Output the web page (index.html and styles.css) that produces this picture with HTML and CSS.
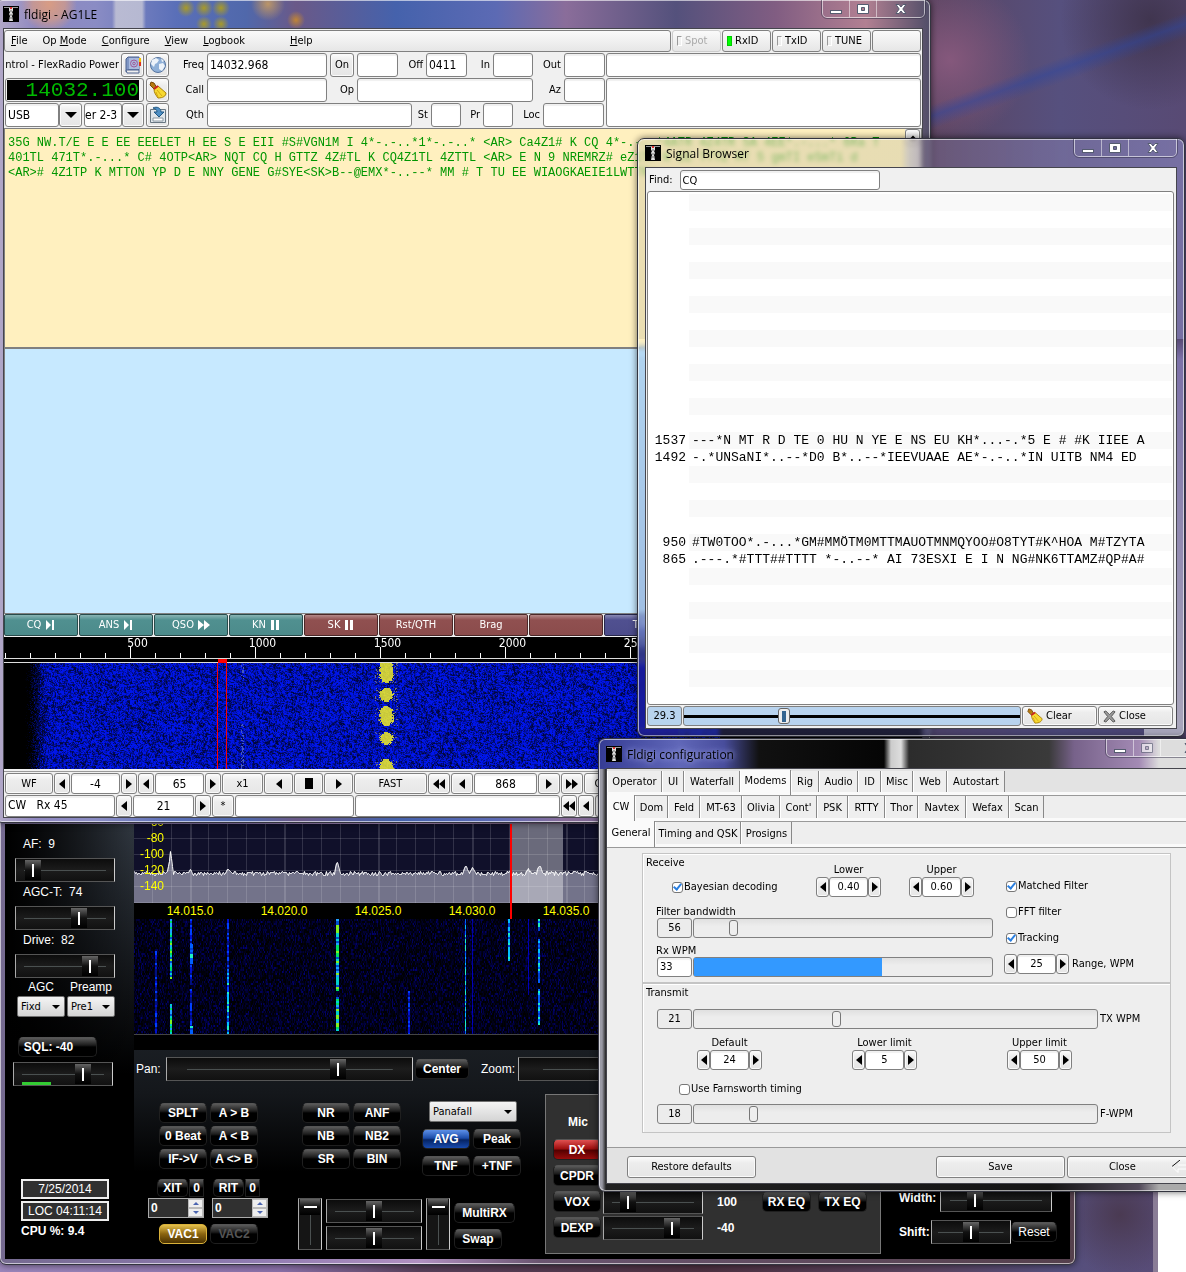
FILE: index.html
```html
<!DOCTYPE html>
<html lang="en">
<head>
    <meta charset="UTF-8">
    <meta name="viewport" content="width=device-width, initial-scale=1.0">
    <title>fldigi - AG1LE</title>
    <link rel="stylesheet" href="styles.css">
</head>
<body>
    <!-- icon set -->
    <svg class="sprites" aria-hidden="true">
        <symbol id="app" viewBox="0 0 16 16"><path d="M0 0h16v16H0z" fill="#000"/><path d="M1 1.500h14" stroke="#999"/><path d="M6 2h4v3l-1 1 1 2-1 2 1 5H6l1-5-1-2 1-2-1-1z" fill="#ddd"/><path d="M7 1h2v2H7z" fill="#d33"/><path d="M7 5h2M7 9h2M6 12h4" stroke="#777"/></symbol>
        <symbol id="left" viewBox="0 0 6 10"><path d="M6 0v10L0 5z"/></symbol>
        <symbol id="right" viewBox="0 0 6 10"><path d="M0 0v10l6-5z"/></symbol>
        <symbol id="left2" viewBox="0 0 12 10"><path d="M6 0v10L0 5zM12 0v10L6 5z"/></symbol>
        <symbol id="right2" viewBox="0 0 12 10"><path d="M0 0v10l6-5zM6 0v10l6-5z"/></symbol>
        <symbol id="next" viewBox="0 0 10 10"><path d="M1 0v10l5-5zM7 0h2v10H7z"/></symbol>
        <symbol id="pause" viewBox="0 0 10 10"><path d="M1 0h3v10H1zM6 0h3v10H6z"/></symbol>
        <symbol id="down" viewBox="0 0 12 6"><path d="M0 0h12L6 6z"/></symbol>
        <symbol id="up" viewBox="0 0 12 6"><path d="M0 6h12L6 0z"/></symbol>
        <symbol id="min" viewBox="0 0 14 12"><rect x="1.500" y="7.500" width="11" height="3" fill="#fff" stroke="#555c70"/></symbol>
        <symbol id="max" viewBox="0 0 14 12"><path d="M1.500 1.500h11v9h-11zM5.500 4.500h3v3h-3z" fill="#fff" fill-rule="evenodd" stroke="#555c70"/></symbol>
        <symbol id="exit" viewBox="0 0 14 12"><path d="M2 1.500h3l2 2.500 2-2.500h3L8.800 6l3.200 4.500H9L7 8l-2 2.500H2L5.200 6z" fill="#fff" stroke="#555c70"/></symbol>
        <symbol id="book" viewBox="0 0 18 18"><path d="M4 1h11v13H4L2 16V3z" fill="#7f96c4" stroke="#4c628f"/><path d="M5 2h10v11H5z" fill="#a9bbdf"/><path d="M2 14h13v3H3z" fill="#eee" stroke="#4c628f"/><path d="M15 2h2v4h-2z" fill="#f5c400"/><path d="M15 6h2v4h-2z" fill="#dc3220"/><circle cx="10" cy="7.500" r="3.500" fill="none" stroke="#a05a98"/><circle cx="10" cy="7.500" r="1.300" fill="none" stroke="#a05a98"/></symbol>
        <symbol id="globe" viewBox="0 0 18 18"><circle cx="9" cy="9" r="7.500" fill="#8fb0d8" stroke="#56749f"/><path d="M3 4l4-2 3 2-2 3-2 1-1 3-3-3zM10 8l4-1 2 3-3 5-3-2zM12 2l3 3-2 1z" fill="#edf3fa"/></symbol>
        <symbol id="broom" viewBox="0 0 18 18"><path d="M2 1l3 1 3 5-2 2-5-5z" fill="#b67a10" stroke="#7a4a05"/><path d="M5 8l4-3 8 7c0 3-3 5-8 5-2-3-4-5-4-9z" fill="#f7d930" stroke="#a8800b"/><path d="M5 8l4-3" stroke="#c22" stroke-width="2"/><path d="M8 9l5 6M7 11l2 5" stroke="#d5a712"/></symbol>
        <symbol id="store" viewBox="0 0 18 18"><path d="M1.500 3.500h15v13h-15z" fill="#dfe5ea" stroke="#697782"/><path d="M4 12h10v3H4z" fill="#fff" stroke="#8b98a2"/><path d="M4 2c4-2 8 0 8 4h3l-5 5-5-5h3c0-2-1-3-4-4z" fill="#4e8fc4" stroke="#205783"/></symbol>
        <symbol id="cross" viewBox="0 0 14 14"><path d="M1 2l2-1 4 4 4-4 2 1-4 5 4 5-2 1-4-4-4 4-2-1 4-5z" fill="#999" stroke="#555"/></symbol>
    </svg>

    <main class="desktop">
        <div class="back-window"></div>

        <!-- radio console -->
        <section class="window radio">
            <div class="radio-body">
                <aside class="radio-side">
                    <label class="side-label" for="af">AF:&nbsp; 9</label>
                    <input class="fader" id="af" type="range" value="11">
                    <label class="side-label" for="agct">AGC-T:&nbsp; 74</label>
                    <input class="fader" id="agct" type="range" value="67">
                    <label class="side-label" for="drive">Drive:&nbsp; 82</label>
                    <input class="fader" id="drive" type="range" value="81">
                    <div class="combo-pair">
                        <label><span>AGC</span><span class="combo"><select><option>Fixd</option></select></span></label>
                        <label><span>Preamp</span><span class="combo"><select><option>Pre1</option></select></span></label>
                    </div>
                    <button class="dark sql">SQL: -40</button>
                    <div class="sql-meter">
                        <input class="fader" type="range" value="74" aria-label="Squelch">
                        <div class="meter"></div>
                    </div>
                    <div class="clock">
                        <div class="clock-box">7/25/2014</div>
                        <div class="clock-box">LOC 04:11:14</div>
                        <b>CPU %: 9.4</b>
                    </div>
                </aside>
                <div class="radio-main">
                    <div class="scope">
                        <canvas id="pan" width="936" height="79"></canvas>
                        <div class="db-scale"><span>-60</span><span>-80</span><span>-100</span><span>-120</span><span>-140</span></div>
                    </div>
                    <div class="freq-scale"><span>14.015.0</span><span>14.020.0</span><span>14.025.0</span><span>14.030.0</span><span>14.035.0</span></div>
                    <canvas id="panfall" width="936" height="115"></canvas>
                    <div class="pan-gap"></div>
                    <div class="pan-row">
                        <label for="panpos">Pan:</label>
                        <input class="fader pan-fader" id="panpos" type="range" value="71">
                        <button class="dark center">Center</button>
                        <label for="zoom">Zoom:</label>
                        <input class="fader zoom-fader" id="zoom" type="range" value="50">
                    </div>
                    <div class="console">
                        <div class="vfo">
                            <div class="pads">
                                <button class="dark">SPLT</button><button class="dark">A &gt; B</button>
                                <button class="dark">0 Beat</button><button class="dark">A &lt; B</button>
                                <button class="dark">IF-&gt;V</button><button class="dark">A &lt;&gt; B</button>
                            </div>
                            <div class="offsets">
                                <div><button class="dark">XIT</button><button class="dark zero">0</button></div>
                                <div><button class="dark">RIT</button><button class="dark zero">0</button></div>
                            </div>
                            <div class="steppers">
                                <div class="stepper"><input value="0" aria-label="XIT offset"><span><button aria-label="XIT up"><svg><use href="#up"/></svg></button><button aria-label="XIT down"><svg><use href="#down"/></svg></button></span></div>
                                <div class="stepper"><input value="0" aria-label="RIT offset"><span><button aria-label="RIT up"><svg><use href="#up"/></svg></button><button aria-label="RIT down"><svg><use href="#down"/></svg></button></span></div>
                            </div>
                            <div class="pads vac">
                                <button class="dark gold">VAC1</button><button class="dark off">VAC2</button>
                            </div>
                        </div>
                        <div class="dsp">
                            <div class="dsp-top">
                                <div class="pads">
                                    <button class="dark">NR</button><button class="dark">ANF</button>
                                    <button class="dark">NB</button><button class="dark">NB2</button>
                                    <button class="dark">SR</button><button class="dark">BIN</button>
                                </div>
                                <div class="display">
                                    <span class="combo wide"><select aria-label="Display"><option>Panafall</option></select></span>
                                    <div class="pads loose">
                                        <button class="dark blue">AVG</button><button class="dark">Peak</button>
                                        <button class="dark">TNF</button><button class="dark">+TNF</button>
                                    </div>
                                </div>
                            </div>
                            <div class="multi">
                                <input class="fader upright" type="range" value="100" aria-label="RX1 level">
                                <div class="multi-col">
                                    <input class="fader" type="range" value="50" aria-label="RX1 balance">
                                    <input class="fader" type="range" value="50" aria-label="RX2 balance">
                                </div>
                                <input class="fader upright" type="range" value="100" aria-label="RX2 level">
                                <div class="multi-buttons">
                                    <button class="dark multirx">MultiRX</button>
                                    <button class="dark">Swap</button>
                                </div>
                            </div>
                        </div>
                        <div class="mic">
                            <div class="mic-buttons">
                                <b>Mic</b>
                                <button class="dark red">DX</button>
                                <button class="dark">CPDR</button>
                                <button class="dark">VOX</button>
                                <button class="dark">DEXP</button>
                            </div>
                            <div class="mic-levels">
                                <div><input class="fader" type="range" value="20" aria-label="VOX level"><b>100</b><button class="dark">RX EQ</button><button class="dark">TX EQ</button></div>
                                <div><input class="fader" type="range" value="73" aria-label="DEXP level"><b>-40</b></div>
                            </div>
                        </div>
                        <div class="filter">
                            <div><label for="fwidth">Width:</label><input class="fader" id="fwidth" type="range" value="28"></div>
                            <div><label for="fshift">Shift:</label><input class="fader short" id="fshift" type="range" value="50"><button class="dark reset">Reset</button></div>
                        </div>
                    </div>
                </div>
            </div>
        </section>

        <!-- fldigi main window -->
        <section class="window fldigi">
            <header class="titlebar">
                <svg class="app-icon"><use href="#app"/></svg>
                <h1>fldigi - AG1LE</h1>
                <div class="win-buttons">
                    <button aria-label="Minimize"><svg><use href="#min"/></svg></button><button aria-label="Maximize"><svg><use href="#max"/></svg></button><button class="exit" aria-label="Close window"><svg><use href="#exit"/></svg></button>
                </div>
            </header>
            <div class="client">
                <div class="top-row">
                    <nav class="menubar">
                        <button><u>F</u>ile</button><button>Op <u>M</u>ode</button><button><u>C</u>onfigure</button><button><u>V</u>iew</button><button><u>L</u>ogbook</button><button class="help"><u>H</u>elp</button>
                    </nav>
                    <button class="light" disabled><i></i>Spot</button>
                    <button class="light on"><i></i>RxID</button>
                    <button class="light"><i></i>TxID</button>
                    <button class="light"><i></i>TUNE</button>
                    <button class="light" aria-label="Blank"></button>
                </div>
                <div class="log">
                    <div class="rig">
                        <div class="row"><span class="rig-name">ontrol - FlexRadio Power</span><button class="btn icon" aria-label="Callbook"><svg><use href="#book"/></svg></button><button class="btn icon" aria-label="Web lookup"><svg><use href="#globe"/></svg></button></div>
                        <div class="row"><div class="lcd"><output>14032.100</output></div><button class="btn icon" aria-label="Clear log fields"><svg><use href="#broom"/></svg></button></div>
                        <div class="row"><div class="choice"><input class="field" value="USB" aria-label="Mode"><button class="btn" aria-label="Pick mode"><svg class="arrow-down"><use href="#down"/></svg></button></div><div class="choice narrow"><input class="field" value="er 2-3" aria-label="Filter"><button class="btn" aria-label="Pick filter"><svg class="arrow-down"><use href="#down"/></svg></button></div><button class="btn icon" aria-label="Save contact"><svg><use href="#store"/></svg></button></div>
                    </div>
                    <div class="contact">
                        <div class="row">
                            <label class="w33" for="freq">Freq</label><input class="field w120" id="freq" value="14032.968">
                            <button class="btn w24">On</button><input class="field w41" aria-label="Time on">
                            <label class="w22" for="toff">Off</label><input class="field w41" id="toff" value="0411">
                            <label class="w20" for="rin">In</label><input class="field w40" id="rin">
                            <label class="w25" for="rout">Out</label><input class="field w41" id="rout">
                        </div>
                        <div class="row">
                            <label class="w33" for="call">Call</label><input class="field w120" id="call">
                            <label class="w24" for="op">Op</label><input class="field w176" id="op">
                            <label class="w25" for="az">Az</label><input class="field w41" id="az">
                        </div>
                        <div class="row">
                            <label class="w33" for="qth">Qth</label><input class="field w205" id="qth">
                            <label class="w13" for="st">St</label><input class="field w30" id="st">
                            <label class="w16" for="pr">Pr</label><input class="field w30" id="pr">
                            <label class="w24" for="loc">Loc</label><input class="field w61" id="loc">
                        </div>
                    </div>
                    <div class="notes">
                        <input class="field" aria-label="Country">
                        <textarea class="field" aria-label="Notes"></textarea>
                    </div>
                </div>
                <div class="rx">
                    <pre>35G NW.T/E E E EE EEELET H EE S E EII #S#VGN1M I 4*-.-..*1*-.-..* &lt;AR&gt; Ca4Z1# K CQ 4*-.-..*4ATR 4Z4TR SA 4EE*.-...* 6Ra T
401TL 471T*.-...* C# 4OTP&lt;AR&gt; NQT CQ H GTTZ 4Z#TL K CQ4Z1TL 4ZTTL &lt;AR&gt; E N 9 NREMRZ# eZ1TP K EE TTTZ MT 5 gmTI eSmTi d
&lt;AR&gt;# 4Z1TP K MTTON YP D E NNY GENE G#SYE&lt;SK&gt;B--@EMX*-..--* MM # T TU EE WIAOGKAEIE1LWTTN&lt;</pre>
                    <div class="scroll"><button class="btn" aria-label="Scroll up"><svg><use href="#up"/></svg></button></div>
                </div>
                <textarea class="tx" aria-label="Transmit text"></textarea>
                <div class="macros">
                    <button>CQ <svg><use href="#next"/></svg></button><button>ANS <svg><use href="#next"/></svg></button><button>QSO <svg class="dbl"><use href="#right2"/></svg></button><button>KN <svg><use href="#pause"/></svg></button>
                    <button class="m-red">SK <svg><use href="#pause"/></svg></button><button class="m-red">Rst/QTH</button><button class="m-red">Brag</button><button class="m-red" aria-label="Macro 8"></button>
                    <button class="m-blue">T/R</button>
                </div>
                <div class="hz-scale"><span>500</span><span>1000</span><span>1500</span><span>2000</span><span>2500</span></div>
                <div class="cursor-bar"><i></i></div>
                <canvas id="fall" width="918" height="106"></canvas>
                <div class="controls">
                    <button class="btn c48">WF</button>
                    <div class="spin"><button class="btn" aria-label="Level down"><svg><use href="#left"/></svg></button><input class="field" value="-4" aria-label="Upper level"><button class="btn" aria-label="Level up"><svg><use href="#right"/></svg></button></div>
                    <div class="spin"><button class="btn" aria-label="Range down"><svg><use href="#left"/></svg></button><input class="field" value="65" aria-label="Range"><button class="btn" aria-label="Range up"><svg><use href="#right"/></svg></button></div>
                    <button class="btn c41">x1</button>
                    <button class="btn c29" aria-label="Shift left"><svg><use href="#left"/></svg></button><button class="btn c29" aria-label="Centre"><i class="stop"></i></button><button class="btn c29" aria-label="Shift right"><svg><use href="#right"/></svg></button>
                    <button class="btn c73">FAST</button>
                    <button class="btn c22" aria-label="Step back fast"><svg class="dbl"><use href="#left2"/></svg></button><button class="btn c22" aria-label="Step back"><svg><use href="#left"/></svg></button>
                    <input class="field c63" value="868" aria-label="Cursor frequency">
                    <button class="btn c22" aria-label="Step on"><svg><use href="#right"/></svg></button><button class="btn c22" aria-label="Step on fast"><svg class="dbl"><use href="#right2"/></svg></button>
                    <button class="btn c41">QSY</button>
                </div>
                <div class="controls status">
                    <output class="field c110">CW&nbsp;&nbsp; Rx 45</output>
                    <div class="spin speed"><button class="btn" aria-label="WPM down"><svg><use href="#left"/></svg></button><input class="field" value="21" aria-label="WPM"><button class="btn" aria-label="WPM up"><svg><use href="#right"/></svg></button></div>
                    <button class="btn c22">*</button>
                    <output class="field c119"></output>
                    <output class="field c205"></output>
                    <button class="btn" aria-label="AFC back fast"><svg class="dbl"><use href="#left2"/></svg></button><button class="btn" aria-label="AFC back"><svg><use href="#left"/></svg></button><output class="field c63"></output>
                </div>
            </div>
        </section>

        <!-- signal browser -->
        <section class="window browser">
            <header class="titlebar">
                <svg class="app-icon"><use href="#app"/></svg>
                <h1>Signal Browser</h1>
                <div class="win-buttons">
                    <button aria-label="Minimize"><svg><use href="#min"/></svg></button><button aria-label="Maximize"><svg><use href="#max"/></svg></button><button class="exit" aria-label="Close window"><svg><use href="#exit"/></svg></button>
                </div>
            </header>
            <div class="client">
                <div class="find"><label for="find">Find:</label><input class="field" id="find" value="CQ"></div>
                <div class="signals">
                    <table>
                        <tr><th></th><td></td></tr>
                        <tr><th></th><td></td></tr>
                        <tr><th></th><td></td></tr>
                        <tr><th></th><td></td></tr>
                        <tr><th></th><td></td></tr>
                        <tr><th></th><td></td></tr>
                        <tr><th></th><td></td></tr>
                        <tr><th></th><td></td></tr>
                        <tr><th></th><td></td></tr>
                        <tr><th></th><td></td></tr>
                        <tr><th></th><td></td></tr>
                        <tr><th></th><td></td></tr>
                        <tr><th></th><td></td></tr>
                        <tr><th></th><td></td></tr>
                        <tr><th>1537</th><td>---*N MT R D TE 0 HU N YE E NS EU KH*...-.*5 E # #K IIEE A</td></tr>
                        <tr><th>1492</th><td>-.*UNSaNI*..--*D0 B*..--*IEEVUAAE AE*-.-..*IN UITB NM4 ED</td></tr>
                        <tr><th></th><td></td></tr>
                        <tr><th></th><td></td></tr>
                        <tr><th></th><td></td></tr>
                        <tr><th></th><td></td></tr>
                        <tr><th>950</th><td>#TW0TOO*.-...*GM#MMÖTM0MTTMAUOTMNMQYOO#O8TYT#K^HOA M#TZYTA</td></tr>
                        <tr><th>865</th><td>.---.*#TTT##TTTT *-..--* AI 73ESXI E I N NG#NK6TTAMZ#QP#A#</td></tr>
                        <tr><th></th><td></td></tr>
                        <tr><th></th><td></td></tr>
                        <tr><th></th><td></td></tr>
                        <tr><th></th><td></td></tr>
                        <tr><th></th><td></td></tr>
                        <tr><th></th><td></td></tr>
                        <tr><th></th><td></td></tr>
                    </table>
                </div>
                <div class="squelch">
                    <output for="level">29.3</output>
                    <input id="level" type="range" value="29" aria-label="Detection level">
                    <button class="btn"><svg class="big"><use href="#broom"/></svg>Clear</button>
                    <button class="btn"><svg class="mid"><use href="#cross"/></svg>Close</button>
                </div>
            </div>
        </section>

        <!-- configuration dialog -->
        <section class="window config">
            <header class="titlebar">
                <svg class="app-icon"><use href="#app"/></svg>
                <h1>Fldigi configuration</h1>
                <div class="win-buttons">
                    <button aria-label="Minimize"><svg><use href="#min"/></svg></button><button aria-label="Maximize"><svg class="faded"><use href="#max"/></svg></button><button class="exit" aria-label="Close window"><svg><use href="#exit"/></svg></button>
                </div>
            </header>
            <div class="client">
                <div class="tabs">
                    <button class="t55">Operator</button><button class="t22">UI</button><button class="t56">Waterfall</button><button class="t51 active">Modems</button><button class="t28">Rig</button><button class="t39">Audio</button><button class="t23">ID</button><button class="t32">Misc</button><button class="t34">Web</button><button class="t58">Autostart</button>
                </div>
                <div class="tabs">
                    <button class="t28 active">CW</button><button class="t33">Dom</button><button class="t32">Feld</button><button class="t42">MT-63</button><button class="t38">Olivia</button><button class="t37">Cont'</button><button class="t31">PSK</button><button class="t37">RTTY</button><button class="t33">Thor</button><button class="t48">Navtex</button><button class="t43">Wefax</button><button class="t35">Scan</button>
                </div>
                <div class="tabs">
                    <button class="t48 active">General</button><button class="t86">Timing and QSK</button><button class="t51">Prosigns</button>
                </div>
                <div class="page">
                    <fieldset class="receive">
                        <div class="rx-left">
                            <div class="group-name">Receive</div>
                            <div class="decode">
                                <label class="check"><input type="checkbox" checked>Bayesian decoding</label>
                                <div class="titled"><label for="lower">Lower</label><div class="spin small"><button class="btn" aria-label="Lower down"><svg><use href="#left"/></svg></button><input class="field" id="lower" value="0.40"><button class="btn" aria-label="Lower up"><svg><use href="#right"/></svg></button></div></div>
                                <div class="titled"><label for="upper">Upper</label><div class="spin small"><button class="btn" aria-label="Upper down"><svg><use href="#left"/></svg></button><input class="field" id="upper" value="0.60"><button class="btn" aria-label="Upper up"><svg><use href="#right"/></svg></button></div></div>
                            </div>
                            <label class="over" for="bw">Filter bandwidth</label>
                            <div class="slider-row"><output for="bw">56</output><input class="slide" id="bw" type="range" value="12"></div>
                            <label class="over" for="rxwpm">Rx WPM</label>
                            <div class="slider-row"><input class="field" id="rxwpm" value="33"><div class="progress"><i style="width: 63%"></i></div></div>
                        </div>
                        <div class="rx-right">
                            <label class="check"><input type="checkbox" checked>Matched Filter</label>
                            <label class="check"><input type="checkbox">FFT filter</label>
                            <label class="check"><input type="checkbox" checked>Tracking</label>
                            <div class="range"><div class="spin small"><button class="btn" aria-label="Range down"><svg><use href="#left"/></svg></button><input class="field" id="range" value="25"><button class="btn" aria-label="Range up"><svg><use href="#right"/></svg></button></div><label for="range">Range, WPM</label></div>
                        </div>
                    </fieldset>
                    <fieldset class="transmit">
                        <div class="group-name">Transmit</div>
                        <div class="slider-row long"><output for="txwpm">21</output><input class="slide" id="txwpm" type="range" value="35"><label for="txwpm">TX WPM</label></div>
                        <div class="limits">
                            <div class="titled"><label for="def">Default</label><div class="spin small"><button class="btn" aria-label="Default down"><svg><use href="#left"/></svg></button><input class="field" id="def" value="24"><button class="btn" aria-label="Default up"><svg><use href="#right"/></svg></button></div></div>
                            <div class="titled"><label for="low">Lower limit</label><div class="spin small"><button class="btn" aria-label="Lower limit down"><svg><use href="#left"/></svg></button><input class="field" id="low" value="5"><button class="btn" aria-label="Lower limit up"><svg><use href="#right"/></svg></button></div></div>
                            <div class="titled"><label for="high">Upper limit</label><div class="spin small"><button class="btn" aria-label="Upper limit down"><svg><use href="#left"/></svg></button><input class="field" id="high" value="50"><button class="btn" aria-label="Upper limit up"><svg><use href="#right"/></svg></button></div></div>
                        </div>
                        <label class="check farns"><input type="checkbox">Use Farnsworth timing</label>
                        <div class="slider-row long"><output for="fwpm">18</output><input class="slide" id="fwpm" type="range" value="14"><label for="fwpm">F-WPM</label></div>
                    </fieldset>
                </div>
                <footer class="actions">
                    <button class="btn">Restore defaults</button>
                    <button class="btn save">Save</button>
                    <button class="btn close">Close<svg viewBox="0 0 24 14"><path d="M10 0L2 6.500" stroke="#111" fill="none"/><path d="M2 6.500l6 6V9h14V5H8" stroke="#fff" fill="none"/></svg></button>
                </footer>
            </div>
        </section>
    </main>
    <script src="script.js"></script>
</body>
</html>
```
FILE: styles.css
```css
* { box-sizing: border-box; }
body { margin: 0; overflow: hidden; font: 11px/14px "DejaVu Sans Condensed", "DejaVu Sans", sans-serif; color: #000; }
button, input, select, textarea { font: inherit; color: inherit; margin: 0; padding: 0; border: 0; background: none; border-radius: 0; outline: 0; }
button { white-space: nowrap; }
input { min-width: 0; }
textarea { resize: none; display: block; }
canvas { display: block; }
svg { width: 6px; height: 10px; flex: none; }
.sprites { position: absolute; width: 0; height: 0; }

.desktop { position: relative; min-height: 100vh; overflow: hidden; background: linear-gradient(160deg, transparent 45%, rgba(45,70,160,.5) 50%, transparent 56%) 931px 0/255px 140px no-repeat, radial-gradient(circle at 1150px 20px, #40354f 0, transparent 90px), radial-gradient(circle at 950px 60px, #85587c 0, transparent 80px), radial-gradient(circle at 1120px 1215px, #4a3a52 0, transparent 60px), linear-gradient(90deg, #9b86bb 0, #8a70a8 280px, #57405a 420px, #4c3040 700px, #5a4460 930px, #56507e 1060px, #584a74 1186px); }
.back-window { position: absolute; left: 1153px; right: 0; top: 1180px; bottom: 0; border-left: 5px solid #8a7d96; background: #fff; }

/* glass frames */
.window { position: absolute; padding: 0 7px 7px; border: 1px solid #33343f; border-radius: 7px; box-shadow: inset 0 0 0 1px rgba(255,255,255,.6), 0 0 7px rgba(0,0,0,.6); }
.titlebar { display: flex; align-items: center; height: 28px; }
.titlebar h1 { flex: 1; margin: 2px 0 0 5px; font: 12px/16px "Open Sans", "Noto Sans", sans-serif; }
.app-icon { width: 16px; height: 16px; }
.win-buttons { display: flex; align-self: flex-start; border: 1px solid rgba(255,255,255,.6); border-top: 0; border-radius: 0 0 5px 5px; outline: 1px solid rgba(50,45,70,.5); }
.win-buttons button { display: grid; place-items: center; width: 27px; height: 17px; border-right: 1px solid rgba(255,255,255,.5); }
.win-buttons .exit { width: 47px; border: 0; }
.win-buttons svg { width: 14px; height: 12px; }
.faded { opacity: .6; }
.client { background: #f0f0f0; border: 1px solid #45454d; }

/* shared widgets */
.btn { display: inline-flex; align-items: center; justify-content: center; border: 1px solid #808080; border-radius: 3px; background: linear-gradient(#fcfcfc, #ededed 30%, #e6e6e6); box-shadow: inset 0 0 0 1px #fafafa; }
.field { border: 1px solid #808080; border-radius: 3px; background: #fff; box-shadow: inset 0 2px 1px #f0f0f0; padding: 0 2px; font-size: 12px; }
.icon svg { width: 18px; height: 18px; }
.arrow-down { width: 12px; height: 6px; }
.dbl { width: 12px; }
.spin { display: flex; gap: 1px; }
.spin .btn { width: 16px; }
.spin .field { width: 49px; text-align: center; }
.spin.speed .field { width: 61px; }
.spin.small { gap: 0; height: 20px; }
.spin.small .btn { width: 13px; }
.spin.small .field { width: 39px; font-size: 11px; }

/* main window */
.fldigi { left: -5px; top: -1px; width: 936px; padding-bottom: 4px; z-index: 2; background: radial-gradient(circle at 53px 4px, #d89c84 0, rgba(216,156,132,.7) 16px, transparent 28px), radial-gradient(circle at 190px 8px, #a89a28 0, transparent 9px), radial-gradient(circle at 208px 8px, #a89a28 0, transparent 9px), radial-gradient(circle at 225px 8px, #a89a28 0, transparent 9px), radial-gradient(circle at 208px 24px, #a89a28 0, transparent 8px), radial-gradient(circle at 225px 24px, #a89a28 0, transparent 8px), radial-gradient(circle at 272px 4px, #bb9568 0, transparent 17px), radial-gradient(circle at 300px 20px, #c08436 0, transparent 9px), linear-gradient(90deg, transparent 116px, rgba(200,200,215,.8) 120px, rgba(200,200,215,.8) 146px, transparent 150px) 0 0/100% 29px no-repeat, linear-gradient(90deg, #b4aac8, #8f88c0 40px, #8a8cc4 100px, #5a6fb8 180px, #5068ab 250px, #6a5988 300px, #4562ac 400px, #5c6ab4 500px, #8a6d9a 570px, #54517c 680px, #815d82 780px, #b28092 870px, #55506a 931px); }
.fldigi .win-buttons { margin-right: -2px; }
.top-row { display: flex; gap: 1px; height: 23px; padding: 1px 1px 0 0; }
.menubar { display: flex; flex: 1; align-items: center; gap: 15px; padding-left: 6px; border: 1px solid #808080; border-radius: 3px; background: linear-gradient(#fafafa, #e6e6e6); }
.help { margin-left: 30px; }
.light { display: flex; align-items: center; width: 49px; padding-left: 4px; border: 1px solid #808080; border-radius: 3px; background: linear-gradient(#fafafa, #e6e6e6); }
.light i { width: 5px; height: 10px; margin-right: 3px; border: 1px solid #999; border-right-color: #fff; border-bottom-color: #fff; }
.light.on i { background: #0f0; border-color: #0c0; }
.light:disabled { color: #aaa; border-color: #ccc; }
.log { display: flex; height: 75px; padding: 1px 1px 0; }
.row { display: flex; gap: 3px; height: 24px; margin-bottom: 1px; }
.row label { display: flex; align-items: center; justify-content: flex-end; white-space: nowrap; }
.rig { width: 166px; }
.rig .row { gap: 2px; }
.rig .icon { width: 23px; }
.rig-name { display: flex; align-items: center; justify-content: flex-end; flex: 0 0 114px; overflow: hidden; white-space: nowrap; }
.lcd { width: 139px; padding: 1px 4px 1px 1px; border: 1px solid #808080; border-radius: 3px; }
.lcd output { display: block; height: 20px; background: #000; color: #0b0; text-align: right; font: 21px/21px "Liberation Mono", monospace; }
.choice { display: flex; width: 77px; }
.choice .field { flex: 1; width: 20px; }
.choice .btn { width: 23px; }
.choice.narrow { width: 60px; }
.choice.narrow .field { padding: 0; }
.choice.narrow .btn { width: 22px; }
.w13 { width: 13px; } .w16 { width: 16px; } .w20 { width: 20px; } .w22 { width: 22px; }
.w24 { width: 24px; } .w25 { width: 25px; } .w30 { width: 30px; } .w33 { width: 33px; }
.w40 { width: 40px; } .w41 { width: 41px; } .w61 { width: 61px; } .w120 { width: 120px; }
.w176 { width: 176px; } .w205 { width: 205px; }
.notes { display: flex; flex: 1; flex-direction: column; gap: 1px; margin-left: 1px; }
.notes input { height: 24px; }
.notes textarea { height: 49px; }
.rx { display: flex; justify-content: space-between; height: 220px; margin-top: 1px; border: 1px solid #808080; background: #fff0bf; overflow: hidden; }
.rx pre { margin: 7px 0 0 3px; font: 12px/15px "Liberation Mono", monospace; color: #009600; }
.scroll { flex: none; width: 16px; background: #e4e4e4; }
.scroll .btn { width: 15px; height: 16px; }
.scroll svg { width: 8px; height: 5px; }
.tx { width: 100%; height: 266px; border: 1px solid #808080; background: #c7e9ff; }
.macros { display: flex; gap: 1px; height: 22px; overflow: hidden; }
.macros button { display: flex; flex: 0 0 74px; align-items: center; justify-content: center; gap: 4px; color: #fff; border: 1px solid #284b4b; border-radius: 2px; background: linear-gradient(#8ab5b5, #509090 25%, #4c8b8b); }
.macros svg { width: 10px; fill: #fff; }
.macros .dbl { width: 12px; }
.macros .m-red { border-color: #4b2828; background: linear-gradient(#b58a8a, #905050 25%, #8b4c4c); }
.macros .m-blue { border-color: #28284b; background: linear-gradient(#8a8ab5, #505090 25%, #4c4c8b); }
.hz-scale { display: flex; height: 22px; margin-top: 1px; padding-left: 71px; color: #fff; border-bottom: 1px solid #ddd; background: linear-gradient(#fff, #fff) 126px 10px/1px 11px no-repeat, linear-gradient(#fff, #fff) 251px 10px/1px 11px no-repeat, linear-gradient(#fff, #fff) 376px 10px/1px 11px no-repeat, linear-gradient(#fff, #fff) 501px 10px/1px 11px no-repeat, linear-gradient(#fff, #fff) 626px 10px/1px 11px no-repeat, repeating-linear-gradient(90deg, #fff 0 1px, transparent 1px 25px) 1px 16px/100% 5px no-repeat, #000; }
.hz-scale span { width: 125px; text-align: center; font-size: 12px; line-height: 12px; }
.cursor-bar { height: 4px; padding-left: 214px; background: #000; border-bottom: 1px solid #ddd; }
.cursor-bar i { display: block; width: 9px; height: 4px; background: red; }
.controls { display: flex; gap: 1px; height: 23px; margin-top: 2px; padding: 1px 0 0 1px; border-top: 1px solid #999; }
.controls.status { height: 22px; margin-top: 1px; padding-top: 0; border: 0; }
.controls > .btn { flex: none; width: 16px; }
.controls .field { text-align: center; }
.controls output.field { text-align: left; line-height: 19px; }
.controls > .c22 { width: 22px; } .controls > .c29 { width: 29px; } .controls > .c41 { width: 41px; }
.controls > .c48 { width: 48px; } .controls > .c73 { width: 73px; }
.c63 { width: 63px; } .c110 { width: 110px; } .c119 { width: 119px; } .c205 { width: 205px; }
.stop { width: 8px; height: 11px; background: #000; }

/* signal browser */
.browser { left: 637px; top: 138px; width: 548px; z-index: 3; background: linear-gradient(90deg, rgba(220,210,170,.6) 0, rgba(216,208,172,.6) 262px, rgba(120,105,140,.5) 290px, rgba(150,150,210,.5)) 0 0/100% 200px no-repeat, linear-gradient(transparent 200px, rgba(170,205,235,.8) 220px, rgba(150,180,220,.8) 470px, rgba(30,30,150,.8) 530px) 0 0/40px 100% no-repeat, linear-gradient(transparent 200px, rgba(140,130,190,.7) 220px, rgba(190,190,205,.8)) 100% 0/40px 100% no-repeat, linear-gradient(rgba(60,60,110,.5), rgba(60,60,110,.5)) 0 100%/100% 9px no-repeat; backdrop-filter: blur(2px); }
.find { display: flex; align-items: center; gap: 7px; height: 23px; padding: 2px 3px 1px; }
.find .field { width: 200px; height: 20px; font-size: 11px; }
.signals { height: 514px; margin: 0 2px 0 1px; padding: 2px 1px 0; border: 1px solid #808080; border-radius: 3px; background: #fff; }
.signals table { width: 100%; border-collapse: collapse; table-layout: fixed; font: 13px/17px "Liberation Mono", monospace; }
.signals th, .signals td { height: 17px; padding: 0; font-weight: normal; white-space: pre; }
.signals th { width: 40px; padding-right: 3px; text-align: right; }
.signals td { padding-left: 3px; }
.signals tr:nth-child(odd) td { background: #f9f9f9; }
.squelch { display: flex; gap: 1px; height: 23px; padding: 1px 3px 2px 1px; }
.squelch output { width: 35px; border: 1px solid #808080; border-radius: 3px; background: #b8d3ee; line-height: 18px; text-align: center; }
.squelch input { flex: 1; appearance: none; border: 1px solid #808080; border-radius: 3px; background: linear-gradient(#000, #000) 0 50%/100% 3px no-repeat, #b8d3ee; }
.squelch input::-webkit-slider-thumb { appearance: none; width: 12px; height: 16px; border: 1px solid #666; border-radius: 3px; background: linear-gradient(#356590, #356590) center/4px 11px no-repeat, #eee; }
.squelch .btn { width: 75px; justify-content: flex-start; gap: 3px; padding-left: 4px; }
.squelch .btn .big { width: 16px; height: 16px; }
.squelch .btn .mid { width: 13px; height: 13px; }

/* configuration */
.config { left: 598px; top: 738px; width: 607px; z-index: 4; background: linear-gradient(90deg, #353c94, #6067b8 80px, #484d9c 125px, #111 160px, #050505 285px, #ccc 292px, #ddd 302px, #2c2c2c 310px, #3a3a3a 450px, #77628a 475px, #a38ab4 540px, #ddd 560px) 0 0/100% 30px no-repeat, linear-gradient(90deg, #9a9aa5 0 3px, #222 7px, #151515 450px, #524a5a 540px, #aaa 560px); }
.config h1 { text-shadow: 0 0 5px #9aa0e0, 0 0 8px #9aa0e0; }
.config .titlebar { height: 29px; }
.config .exit { padding-left: 10px; }
.config .win-buttons { margin-right: -12px; }
.config .client { background: #eeeeee; }
.tabs { display: flex; height: 26px; padding-top: 2px; border-bottom: 3px solid #fafafa; background: #e3e3e3; }
.tabs + .tabs { background: #eee; border-top: 1px solid #999; padding-top: 0; }
.tabs button { display: grid; place-items: center; padding-top: 1px; border-right: 1px solid #888; border-left: 1px solid #fff; background: #eee; }
.tabs .active { background: #fafafa; margin: -1px 0 -3px; padding: 0 0 3px; }
.t22 { width: 22px; } .t23 { width: 23px; } .t28 { width: 28px; } .t31 { width: 31px; }
.t32 { width: 32px; } .t33 { width: 33px; } .t34 { width: 34px; } .t35 { width: 35px; }
.t37 { width: 37px; } .t38 { width: 38px; } .t39 { width: 39px; } .t42 { width: 42px; }
.t43 { width: 43px; } .t48 { width: 48px; } .t51 { width: 51px; } .t55 { width: 55px; }
.t56 { width: 56px; } .t58 { width: 58px; } .t86 { width: 86px; }
.page { padding: 5px 28px 14px 35px; border-top: 1px solid #999; }
.page fieldset { width: 529px; margin: 0; padding: 2px 0 0 3px; border: 1px solid #c4c4c4; box-shadow: inset 1px 1px #fff; }
.receive { display: flex; height: 130px; }
.rx-left { width: 358px; }
.decode { display: flex; margin-top: -7px; padding-left: 26px; }
.decode .check { margin: 14px 35px 0 0; width: 109px; }
.titled { display: flex; flex-direction: column; align-items: center; width: 65px; white-space: nowrap; }
.titled + .titled { margin-left: 28px; }
.check { display: flex; align-items: center; gap: 1px; height: 20px; white-space: nowrap; }
.check input { appearance: none; display: grid; place-items: center; width: 11px; height: 11px; border: 1px solid #777; border-radius: 3px; background: #fff; }
.check input:checked::after { content: ""; width: 3px; height: 6px; margin-top: -2px; border: solid #2a7fe0; border-width: 0 2px 2px 0; rotate: 40deg; }
.over { display: block; height: 13px; margin: 8px 0 0 10px; }
.over ~ .over { margin-top: 6px; }
.slider-row { display: flex; gap: 1px; height: 20px; padding-left: 11px; }
.slider-row output { width: 35px; border: 1px solid #808080; border-radius: 3px; line-height: 18px; text-align: center; background: #ececec; }
.slider-row .field { width: 35px; font-size: 11px; }
.slide, .progress { width: 300px; border: 1px solid #808080; border-radius: 3px; background: linear-gradient(#e0e0e0, #ededed 40%); }
.progress i { display: block; height: 100%; background: #3399ff; }
.slide { appearance: none; }
.slide::-webkit-slider-thumb { appearance: none; width: 9px; height: 16px; border: 1px solid #777; border-radius: 3px; background: #eee; }
.slider-row.long .slide { width: 405px; }
.slider-row label { line-height: 20px; margin-left: 1px; }
.rx-right { padding-top: 20px; }
.rx-right .check { height: 20px; margin: 0 0 6px 2px; }
.range { display: flex; align-items: center; gap: 3px; margin-top: 1px; }
.transmit { height: 150px; }
.transmit .slider-row { margin-top: 9px; }
.limits { display: flex; justify-content: space-between; width: 375px; margin: 7px 0 0 51px; }
.limits .titled + .titled { margin: 0; }
.farns { margin: 9px 0 -4px 33px; }
.actions { display: flex; gap: 2px; height: 36px; padding: 8px 0 6px 20px; border-top: 1px solid #999; background: #e2e2e2; }
.actions .btn { width: 130px; height: 22px; }
.actions .save { margin-left: 178px; }
.actions .close { padding-left: 40px; }
.actions .close svg { width: 24px; height: 14px; margin-left: 34px; }

/* radio console */
.radio { left: -1px; top: 816px; width: 1077px; padding: 7px 5px 5px; z-index: 1; background: linear-gradient(90deg, #756a90, #8f7bb0 250px, #b090c0 420px, #6a5570 540px, #55404c 1076px); }
.radio-body { display: flex; height: 435px; background: linear-gradient(#373f48, #14171b 62%, #000 80%); color: #fff; font: 12px/16px "Liberation Sans", Arial, sans-serif; overflow: hidden; }
.radio-side { display: flex; flex-direction: column; flex: none; width: 129px; padding: 10px 19px 18px 10px; background: linear-gradient(90deg, #000, transparent), radial-gradient(circle at 100% 0, #303740, #000 250px); }
.side-label { height: 20px; margin: 0 0 4px 8px; line-height: 20px; }
.fader { flex: none; appearance: none; display: block; width: 100px; height: 24px; border: 1px solid #555; border-left-color: #aaa; border-right-color: #ccc; background: linear-gradient(#4a5050, #4a5050) center/84% 1px no-repeat, linear-gradient(#0c0c0c, #1c1c1c 50%, #111); }
.fader::-webkit-slider-thumb { appearance: none; width: 16px; height: 20px; background: linear-gradient(#fff, #fff) center/2px 13px no-repeat, linear-gradient(#666, #111 50%, #000); }
.combo-pair { display: flex; gap: 2px; padding-left: 2px; }
.combo-pair label { display: flex; flex-direction: column; width: 48px; text-align: center; line-height: 18px; }
.combo { position: relative; display: block; }
.combo select { display: block; appearance: none; width: 100%; height: 21px; padding: 0 3px; border: 1px solid #707070; border-radius: 2px; background: linear-gradient(#f4f4f4, #d4d4d4); color: #000; font: 11px/16px "DejaVu Sans Condensed", "DejaVu Sans", sans-serif; }
.combo::after { content: ""; position: absolute; right: 5px; top: 9px; border: 4px solid transparent; border-top-color: #000; border-bottom: 0; pointer-events: none; }
.dark { height: 20px; border: 1px solid #1f1f1f; border-top-color: #555; border-radius: 5px; background: linear-gradient(#5a5a5a, #1c1c1c 40%, #000 50%); color: #fff; font-weight: bold; text-align: center; }
.dark.sql { width: 79px; margin: 20px 0 5px 3px; padding-right: 18px; }
.sql-meter { margin-left: -2px; }
.meter { position: relative; width: 29px; height: 3px; margin: -4px 0 0 9px; background: #3c3; }
.clock { margin-top: auto; padding-left: 6px; white-space: nowrap; }
.clock-box { width: 88px; height: 20px; margin-bottom: 2px; border: 2px solid #eee; background: #303030; text-align: center; }
.clock b { display: block; margin-bottom: 2px; }
.radio-main { flex: 1; min-width: 0; }
.scope { position: relative; height: 79px; overflow: hidden; }
.db-scale { position: absolute; left: 0; top: -10px; width: 30px; color: #ff0; text-align: right; }
.db-scale span { display: block; }
.freq-scale { display: flex; height: 16px; padding-left: 9px; background: linear-gradient(red, red) 376px 0/2px 100% no-repeat, #000; color: #ff0; }
.freq-scale span { width: 94px; text-align: center; }
.pan-gap { height: 16px; background: #000; border-top: 1px solid #444; }
.pan-row { display: flex; align-items: center; padding: 7px 0 0 2px; }
.pan-row label { width: 30px; }
.pan-row label + .zoom-fader { width: 300px; }
.pan-row .pan-fader { width: 247px; }
.center { width: 54px; margin: 0 12px 0 2px; }
.pan-row .center + label { width: 37px; }
.console { display: flex; }
.vfo { width: 120px; margin: 22px 30px 0 14px; }
.pads { display: grid; grid-template-columns: 48px 48px; gap: 3px; }
.vfo .pads { margin-left: 11px; }
.offsets { display: flex; gap: 9px; margin: 10px 0 0 9px; }
.offsets div { display: flex; gap: 1px; }
.offsets .dark { width: 31px; height: 18px; }
.offsets .zero { width: 15px; border-radius: 1px; }
.steppers { display: flex; gap: 8px; margin-top: 1px; }
.stepper { display: flex; width: 56px; height: 20px; border: 1px solid #aaa; background: #303030; font-weight: bold; }
.stepper input { flex: 1; padding-left: 2px; }
.stepper button { display: grid; place-items: center; width: 15px; height: 9px; border: 1px solid #bbb; background: #eee; }
.stepper svg { width: 6px; height: 3px; fill: #4a64b0; }
.vfo .vac { margin-top: 6px; }
.gold { border-color: #d9b13a; background: linear-gradient(#e5c04a, #8a6410 50%, #4b3200); }
.off { color: #555; }
.blue { background: linear-gradient(#5d90e8, #1c4ca8 45%, #062463 55%, #1749ad); }
.red { background: linear-gradient(#e05050, #a01010 45%, #560000 55%, #980c0c); }
.dsp { width: 224px; margin-right: 23px; }
.dsp-top { display: flex; gap: 21px; height: 117px; padding: 22px 0 0 4px; }
.dsp-top > .pads { align-content: start; }
.display { margin-top: -2px; }
.wide { width: 88px; margin: 0 0 7px 7px; }
.loose { row-gap: 7px; }
.multi { display: flex; gap: 4px; }
.multi-col { display: flex; flex-direction: column; gap: 3px; padding-top: 1px; }
.multi .fader { width: 96px; }
.multi .upright { writing-mode: vertical-lr; direction: rtl; width: 24px; height: 52px; background: linear-gradient(#4a5050, #4a5050) center/1px 84% no-repeat, #151515; }
.upright::-webkit-slider-thumb { width: 20px; height: 16px; background: linear-gradient(#fff, #fff) center/13px 2px no-repeat, linear-gradient(#666, #111 50%, #000); }
.multi-buttons { padding-top: 5px; }
.multi-buttons .dark { display: block; width: 48px; margin-bottom: 6px; }
.multi-buttons .multirx { width: 61px; }
.mic { display: flex; width: 336px; height: 160px; margin-top: 13px; padding: 0 0 0 7px; border: 1px solid #777; background: #303030; }
.mic-buttons { display: flex; flex-direction: column; gap: 5px; width: 50px; padding-top: 19px; }
.mic-buttons b { height: 20px; text-align: center; }
.mic-buttons .dark { height: 21px; width: 48px; }
.mic-levels { padding-top: 95px; }
.mic-levels div { display: flex; align-items: center; margin-bottom: 2px; }
.mic-levels b { width: 45px; margin-left: 14px; }
.mic-levels .dark { width: 49px; margin-right: 7px; }
.filter { padding: 107px 0 0 18px; font-weight: bold; }
.filter div { display: flex; align-items: center; height: 24px; margin-bottom: 8px; }
.filter label { width: 41px; padding-bottom: 4px; }
.filter div + div label { width: 32px; padding: 0; }
.filter .fader { width: 112px; }
.filter .short { width: 80px; }
.reset { width: 46px; font-weight: normal; }
```
FILE: script.js
```js
// seeded generator so the traces look the same on every load
let seed = 12345;
function rnd() {
    seed = (seed * 1103515245 + 12345) % 2147483648;
    return seed / 2147483648;
}

// audio waterfall
function drawFall() {
    const c = document.getElementById("fall");
    const ctx = c.getContext("2d");
    const img = ctx.createImageData(c.width, c.height);
    const blobs = [[0, 20], [25, 39], [43, 63], [69, 82], [96, 110]];
    const prev = new Array(c.width).fill(0.5);
    for (let y = 0; y < c.height; y++) {
        let last = 0.5;
        const blob = blobs.find(b => y >= b[0] && y < b[1]);
        let half = 0;
        if (blob) {
            // narrow at both ends
            const edge = Math.min(y - blob[0] + (blob[0] === 0 ? 5 : 0), blob[1] - 1 - y);
            half = Math.min(6, 2 + edge);
        }
        for (let x = 0; x < c.width; x++) {
            const n = rnd() * 0.5 + last * 0.25 + prev[x] * 0.25;
            last = n;
            prev[x] = n;
            let v = Math.max(0.25, Math.min(1, (n - 0.2) * 1.75 + 0.22));
            v *= Math.max(0, Math.min(1, (x - 20 - rnd() * 12) / 16));
            if (x > 715) v = 0;
            let r = 0, g = 22 * v, b = 235 * v;
            const d = Math.abs(x - 382);
            if (blob && d < half - 1 + rnd() * 3) { r = 190 + n * 30; g = 190 + n * 30; b = 60; }
            else if (blob && d < 12 && rnd() < 0.15) { r = 110; g = 110; b = 120; }
            if (Math.abs(x - 238) < 2 && (y < 16 || y > 60) && rnd() < 0.35) { r = 70; g = 90; b = 190; }
            if (x === 213 || x === 222) { r = 255; g = 0; b = 0; }
            const i = (y * c.width + x) * 4;
            img.data[i] = r; img.data[i + 1] = g; img.data[i + 2] = b; img.data[i + 3] = 255;
        }
    }
    ctx.putImageData(img, 0, 0);
}

// panadapter trace
function drawPan() {
    const c = document.getElementById("pan");
    const ctx = c.getContext("2d");
    const peaks = { 36: 21, 56: 5, 94: 6, 203: 13, 331: 9, 338: 5, 375: 4, 394: 4, 405: 9 };
    ctx.fillStyle = "#10102a";
    ctx.fillRect(0, 0, c.width, c.height);
    const top = [];
    for (let x = 0; x < c.width; x++) {
        let y = 49 + Math.round((rnd() - 0.5) * 4);
        for (const p in peaks) {
            const d = Math.abs(x - p);
            if (d < 3) y -= peaks[p] * (1 - d / 3);
        }
        top.push(y);
    }
    ctx.fillStyle = "#73738a";
    ctx.beginPath();
    ctx.moveTo(0, c.height);
    top.forEach((y, x) => ctx.lineTo(x, y));
    ctx.lineTo(c.width, c.height);
    ctx.fill();
    ctx.fillStyle = "rgba(255,255,255,.14)";
    for (let y = 14; y < c.height; y += 16) ctx.fillRect(0, y, c.width, 1);
    for (let i = 0; i < 50; i++) ctx.fillRect(Math.round(18 + i * 18.8), 0, i % 5 === 2 ? 2 : 1, c.height);
    ctx.fillStyle = "rgba(255,255,255,.38)";
    ctx.fillRect(378, 0, 51, c.height);
    ctx.strokeStyle = "#fff";
    ctx.beginPath();
    top.forEach((y, x) => ctx.lineTo(x + 0.5, y + 0.5));
    ctx.stroke();
    ctx.fillStyle = "red";
    ctx.fillRect(376, 0, 2, c.height);
}

// panadapter waterfall
function drawPanfall() {
    const c = document.getElementById("panfall");
    const ctx = c.getContext("2d");
    ctx.fillStyle = "#000018";
    ctx.fillRect(0, 0, c.width, c.height);
    for (let y = 0; y < c.height; y += 2) {
        for (let x = 0; x < c.width; x++) {
            const v = Math.floor(rnd() * rnd() * 125);
            ctx.fillStyle = `rgb(0,0,${v})`;
            ctx.fillRect(x, y, 1, 2 + Math.floor(rnd() * 3));
        }
    }
    // x, width, from, to, strength
    const lines = [
        [21, 2, 32, 115, 1], [36, 2, 0, 60, 3], [36, 2, 85, 115, 3], [56, 2, 0, 65, 1], [56, 3, 25, 45, 2],
        [56, 2, 70, 115, 1], [56, 3, 107, 115, 2], [93, 2, 0, 115, 1], [93, 2, 50, 65, 2], [93, 2, 73, 115, 2],
        [202, 3, 0, 72, 3], [202, 3, 78, 112, 3], [274, 2, 72, 115, 1], [331, 1, 0, 115, 2], [338, 1, 0, 115, 0],
        [374, 2, 0, 42, 2], [394, 1, 0, 75, 0], [404, 2, 0, 12, 2], [404, 2, 20, 64, 2], [404, 2, 70, 105, 2]
    ];
    const shades = [["#0000a0", "#0000c0"], ["#0010d0", "#0040ff", "#001080"], ["#0060ff", "#00c0ff", "#20f0c0", "#0040d0"], ["#00e060", "#80f020", "#00d0d0", "#20a0ff", "#0050d0"]];
    for (const [x, w, y0, y1, s] of lines) {
        for (let y = y0; y < y1; y += 2) {
            ctx.fillStyle = shades[s][Math.floor(rnd() * shades[s].length)];
            ctx.fillRect(x, y, w, 2);
        }
    }
}

drawFall();
drawPan();
drawPanfall();
```
